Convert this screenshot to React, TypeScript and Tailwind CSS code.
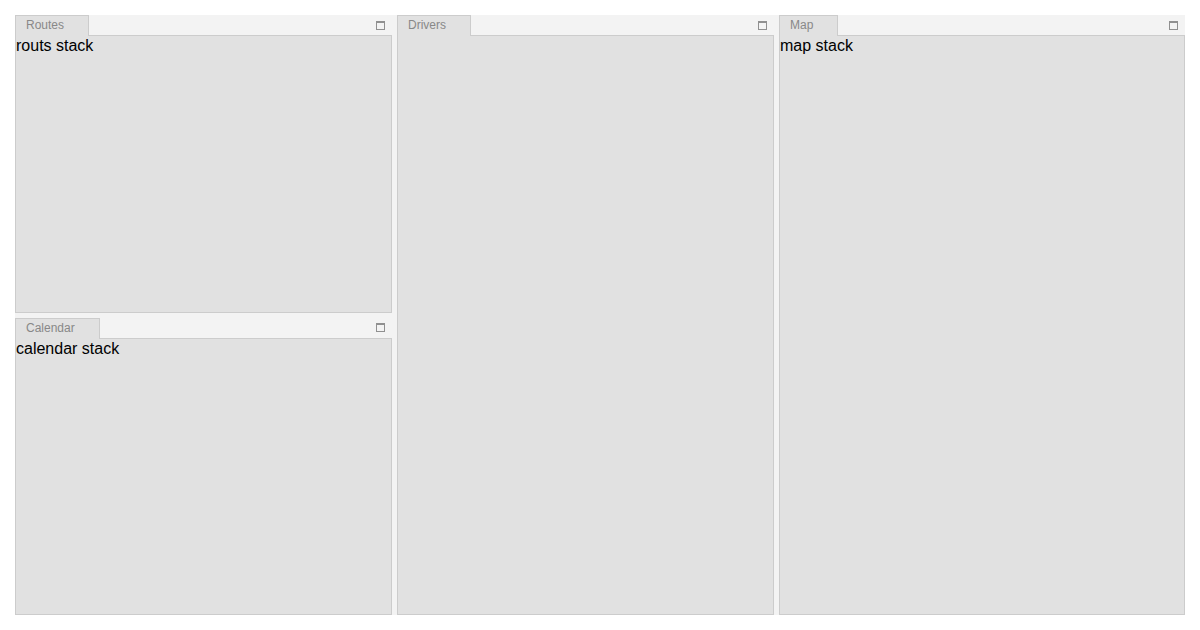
import React from 'react';

interface StackProps {
  title: string;
  children?: React.ReactNode;
  className?: string;
}

const Stack: React.FC<StackProps> = ({ title, children, className = '' }) => {
  return (
    <div className={`flex flex-col min-h-0 ${className}`}>
      {/* Header */}
      <div className="h-[20px] shrink-0 flex items-end justify-between bg-[#f3f3f3] relative z-10">
        <div className="h-[21px] -mb-[1px] border-x border-t border-[#cccccc] bg-[#e1e1e1] pl-[10px] pr-[24px] text-[12px] leading-[19px] text-[#888888]">
          {title}
        </div>
        <div className="self-center mr-[7px] w-[9px] h-[9px] border border-t-2 border-[#909090]" />
      </div>

      {/* Content */}
      <div className="flex-1 min-h-0 bg-[#e1e1e1] border border-[#cccccc] text-[16px] leading-[19px] text-black">
        {children}
      </div>
    </div>
  );
};

export default function App() {
  return (
    <div className="w-[1200px] h-[630px] bg-white p-[15px] font-['Liberation_Sans',Arial,sans-serif]">
      <div className="flex h-full gap-[5px] bg-[#f3f3f3]">
        <div className="w-[377px] flex flex-col gap-[5px]">
          <Stack title="Routes" className="flex-1">routs stack</Stack>
          <Stack title="Calendar" className="flex-1">calendar stack</Stack>
        </div>
        <Stack title="Drivers" className="w-[377px]" />
        <Stack title="Map" className="flex-1">map stack</Stack>
      </div>
    </div>
  );
}
